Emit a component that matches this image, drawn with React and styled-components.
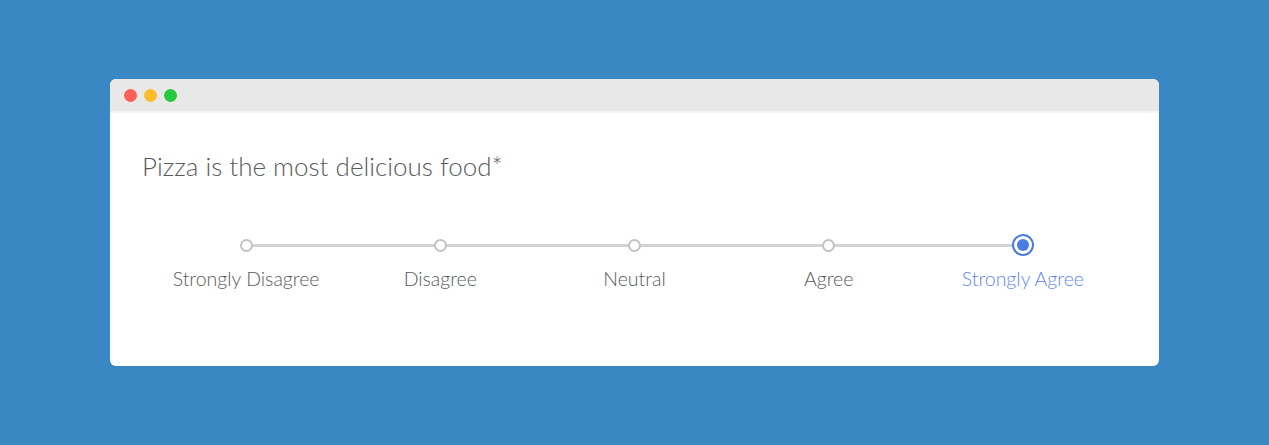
import React from "react";
import styled, { createGlobalStyle } from "styled-components";

const GlobalStyle = createGlobalStyle`
  html, body {
    margin: 0;
    padding: 0;
    background: #3988c3;
  }
  body {
    font-family: Lato, "Open Sans", sans-serif;
    padding-top: 79px;
  }
`;

const Window = styled.div`
  width: 1049px;
  margin: 0 auto;
  background: #fff;
  border-radius: 6px;
  overflow: hidden;
`;

const TitleBar = styled.div`
  height: 32px;
  background: #e8e8e8;
  border-bottom: 2px solid #f3f3f3;
  display: flex;
  align-items: center;
  gap: 7px;
  padding: 0 14px;
  box-sizing: content-box;
`;

const Light = styled.span`
  width: 13px;
  height: 13px;
  border-radius: 50%;
  background: ${(p) => p.$color};
`;

const Body = styled.div`
  padding: 38px 39px 75px;
`;

const Question = styled.h2`
  margin: 0 0 52px -7px;
  font-family: Lato, sans-serif;
  font-weight: 300;
  font-size: 26px;
  line-height: 1.2;
  color: #5a5a5a;
`;

const Scale = styled.ul`
  list-style: none;
  margin: 0;
  padding: 0;
  display: grid;
  grid-template-columns: repeat(5, 1fr);
`;

const Step = styled.li`
  position: relative;
  display: flex;
  flex-direction: column;
  align-items: center;
  cursor: pointer;

  &:not(:first-child)::before {
    content: "";
    position: absolute;
    top: 9.5px;
    left: -50%;
    right: 50%;
    height: 3px;
    background: #d4d4d4;
    z-index: 0;
  }
`;

const RadioZone = styled.div`
  height: 22px;
  display: flex;
  align-items: center;
  justify-content: center;
  position: relative;
  z-index: 1;
`;

const Radio = styled.span`
  box-sizing: border-box;
  display: flex;
  align-items: center;
  justify-content: center;
  border-radius: 50%;
  background: #fff;
  width: ${(p) => (p.$checked ? "22px" : "13px")};
  height: ${(p) => (p.$checked ? "22px" : "13px")};
  border: ${(p) => (p.$checked ? "2px solid #4b7be5" : "2.5px solid #c2c2c2")};

  &::after {
    content: "";
    display: ${(p) => (p.$checked ? "block" : "none")};
    width: 12px;
    height: 12px;
    border-radius: 50%;
    background: #4b7be5;
  }
`;

const Label = styled.span`
  margin-top: 11px;
  font-size: 19.5px;
  font-weight: 300;
  line-height: 1.2;
  color: ${(p) => (p.$checked ? "#5f87ea" : "#5a5a5a")};
`;

const options = [
  "Strongly Disagree",
  "Disagree",
  "Neutral",
  "Agree",
  "Strongly Agree",
];

export default function App() {
  const [value, setValue] = React.useState(4);
  return (
    <>
      <GlobalStyle />
      <Window>
        <TitleBar>
          <Light $color="#fe5f57" />
          <Light $color="#febc2e" />
          <Light $color="#28c840" />
        </TitleBar>
        <Body>
          <Question>Pizza is the most delicious food*</Question>
          <Scale>
            {options.map((o, i) => (
              <Step key={o} onClick={() => setValue(i)}>
                <RadioZone>
                  <Radio $checked={value === i} />
                </RadioZone>
                <Label $checked={value === i}>{o}</Label>
              </Step>
            ))}
          </Scale>
        </Body>
      </Window>
    </>
  );
}
